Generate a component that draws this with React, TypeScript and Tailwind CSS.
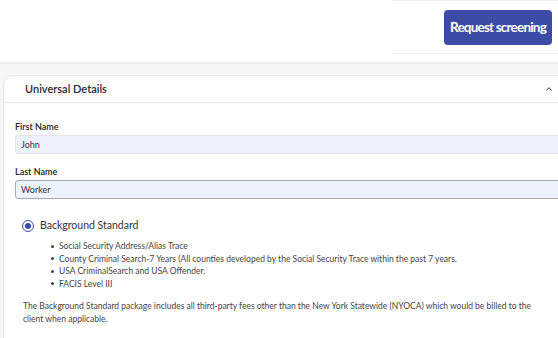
import { ChevronUp } from "lucide-react";

const checks = [
  "Social Security Address/Alias Trace",
  "County Criminal Search-7 Years (All counties developed by the Social Security Trace within the past 7 years.",
  "USA CriminalSearch and USA Offender.",
  "FACIS Level III",
];

const App = () => {
  return (
    <div
      className="w-[558px] h-[338px] overflow-hidden bg-[#f7f7f7] text-[#222]"
      style={{ fontFamily: "Lato, 'Noto Sans', sans-serif" }}
    >
      {/* top bar */}
      <div className="h-[64px] bg-white border-b-2 border-[#ececec] flex justify-end">
        <div className="w-[166px] h-[54px] border-y border-[#ececec] flex items-center justify-end pr-[6px]">
          <button className="w-[108px] h-[35px] rounded-[4px] bg-[#3c4ca6] text-white text-[13.5px] font-bold tracking-[-0.8px]">
            Request screening
          </button>
        </div>
      </div>

      {/* card */}
      <div className="mt-[11px] ml-[3px] w-[600px] bg-white border border-[#e6e6e6] rounded-tl-[10px]">
        <div className="h-[27px] flex items-center pl-[21px] pr-[48px] border-b border-[#e6e6e6]">
          <span className="text-[11px] font-semibold text-[#2a2a2a]">Universal Details</span>
          <ChevronUp className="ml-auto w-[10px] h-[10px] text-[#555]" strokeWidth={2.5} />
        </div>

        <div className="pl-[11px] pt-[18px] pb-[20px]">
          <label className="block text-[9px] leading-[12px] font-semibold text-[#222] mb-[2px]">First Name</label>
          <div className="h-[19px] w-[560px] bg-[#edf2fc] border border-[#e2e4e8] rounded-[3px] flex items-center pl-[5px] text-[9px] text-[#333]">
            John
          </div>

          <label className="block text-[9px] leading-[12px] font-semibold text-[#222] mt-[12px] mb-[2px]">Last Name</label>
          <div className="h-[19px] w-[560px] bg-[#edf2fc] border border-[#a6aaae] rounded-[3px] flex items-center pl-[5px] text-[9px] text-[#333]">
            Worker
          </div>

          <div className="mt-[20px] h-[14px] pl-[7px] flex items-center gap-[6px]">
            <span className="w-[12px] h-[12px] rounded-full border-[1.5px] border-[#3c4ca6] flex items-center justify-center">
              <span className="w-[6px] h-[6px] rounded-full bg-[#3c4ca6]" />
            </span>
            <span className="text-[10.5px] text-[#333]">Background Standard</span>
          </div>

          <ul className="mt-[7px] pl-[36px] text-[8.5px] leading-[12.5px] text-[#444]">
            {checks.map((c) => (
              <li key={c} className="flex items-center gap-[5px]">
                <span className="w-[3px] h-[3px] rounded-full bg-[#444]" />
                {c}
              </li>
            ))}
          </ul>

          <p className="mt-[10px] pl-[8px] w-[522px] text-[8.5px] leading-[12.5px] text-[#444]">
            The Background Standard package includes all third-party fees other than the New York Statewide (NYOCA) which would be billed to the client when applicable.
          </p>
        </div>
      </div>
    </div>
  );
};

export default App;
